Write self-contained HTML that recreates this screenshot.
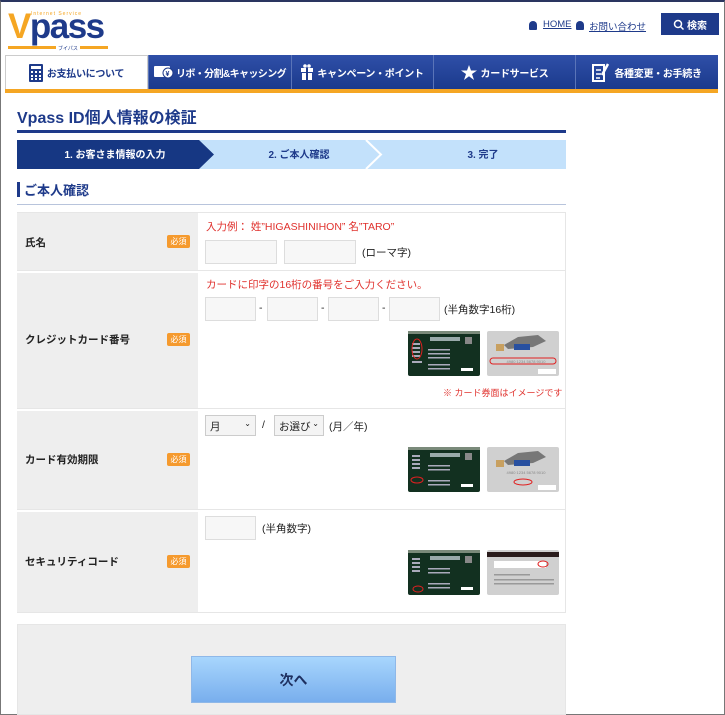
<!DOCTYPE html>
<html><head><meta charset="utf-8"><style>
*{box-sizing:border-box;margin:0;padding:0}
body{width:725px;height:715px;position:relative;overflow:hidden;background:#fff;font-family:"Liberation Sans","Noto Sans CJK JP",sans-serif;color:#222}
.a{position:absolute}
.frame{left:0;top:0;width:725px;height:715px;border:1px solid #777;border-top:2px solid #2a3560}
.tab{top:55px;height:34px;background:linear-gradient(#2f4fa8,#1b3a8c);color:#fff;font-size:10px;font-weight:bold;display:flex;align-items:center;justify-content:center;gap:4px;border-left:1px solid #5a74b8;white-space:nowrap;letter-spacing:-0.3px}
.ob{top:89px;height:4px;background:#f5a623}
.row{left:17px;width:549px;border:1px solid #e6e6e6;border-top:none}
.lab{left:17px;width:181px;background:#eee;font-size:11px;font-weight:bold}
.req{width:23px;height:13px;background:#f59a2e;color:#fff;font-size:8px;text-align:center;line-height:13px;border-radius:2px}
.inp{height:24px;border:1px solid #ddd;background:#f7f7f7}
.red{color:#e0322e;font-size:10.5px}
.t{font-size:10.5px}
.sel{height:21px;border:1px solid #ccc;background:#f4f4f4;font-size:10.5px;padding:3px 4px}
</style></head><body>
<div class="a frame"></div>
<!-- logo -->
<div class="a" style="left:8px;top:9px;font-size:35px;font-weight:bold;line-height:36px;letter-spacing:-1.5px"><span style="color:#f5a623">V</span><span style="color:#1e3a8a">pass</span></div>
<div class="a" style="left:31px;top:11px;font-size:5px;color:#f5a623;letter-spacing:1px">Internet Service</div>
<div class="a" style="left:8px;top:46px;width:100px;height:3px;background:#f5a623"></div>
<div class="a" style="left:56px;top:45px;font-size:5px;color:#1e3a8a;background:#fff;padding:0 2px">ブイパス</div>
<!-- header links -->
<div class="a" style="left:529px;top:21px;width:8px;height:9px;border-radius:4px 4px 1px 1px;background:#1e3a8a"></div>
<div class="a" style="left:543px;top:19px;font-size:9.5px;color:#1e3a8a;text-decoration:underline">HOME</div>
<div class="a" style="left:576px;top:21px;width:8px;height:9px;border-radius:4px 4px 1px 1px;background:#1e3a8a"></div>
<div class="a" style="left:589px;top:19px;font-size:9.5px;color:#1e3a8a;text-decoration:underline">お問い合わせ</div>
<div class="a" style="left:661px;top:13px;width:58px;height:22px;background:#1e3a8a;color:#fff;font-size:10px;font-weight:bold;display:flex;align-items:center;justify-content:center;gap:3px"><svg width="11" height="11"><circle cx="5" cy="5" r="3.5" stroke="#fff" stroke-width="1.5" fill="none"/><line x1="7.5" y1="7.5" x2="10.5" y2="10.5" stroke="#fff" stroke-width="1.5"/></svg>検索</div>
<!-- nav -->
<div class="a" style="left:5px;top:55px;width:713px;height:1px;background:#ccc"></div>
<div class="a tab" style="left:5px;width:143px;background:#fff;color:#1e3a8a;border:1px solid #ccc;border-bottom:none"><svg width="14" height="18"><rect x="0" y="0" width="14" height="18" rx="1" fill="#1e3a8a"/><rect x="2" y="2" width="10" height="3" fill="#fff"/><g fill="#fff"><rect x="2" y="7" width="2" height="2"/><rect x="6" y="7" width="2" height="2"/><rect x="10" y="7" width="2" height="2"/><rect x="2" y="11" width="2" height="2"/><rect x="6" y="11" width="2" height="2"/><rect x="10" y="11" width="2" height="2"/><rect x="2" y="14" width="2" height="2"/><rect x="6" y="14" width="2" height="2"/><rect x="10" y="14" width="2" height="2"/></g></svg>お支払いについて</div>
<div class="a tab" style="left:148px;width:143px;gap:2px;letter-spacing:-0.6px"><svg width="20" height="14"><rect x="0" y="1" width="16" height="11" rx="1" fill="#fff"/><circle cx="14" cy="8" r="5" fill="#fff" stroke="#1e3a8a"/><text x="11.5" y="11" font-size="7" fill="#1e3a8a" font-weight="bold">¥</text></svg>リボ・分割&amp;キャッシング</div>
<div class="a tab" style="left:291px;width:142px"><svg width="12" height="16"><rect x="0" y="4" width="12" height="4" fill="#fff"/><rect x="1" y="9" width="10" height="7" fill="#fff"/><rect x="5" y="4" width="2" height="12" fill="#1e3a8a"/><circle cx="4" cy="2" r="1.8" fill="#fff"/><circle cx="8" cy="2" r="1.8" fill="#fff"/></svg>キャンペーン・ポイント</div>
<div class="a tab" style="left:433px;width:142px"><svg width="16" height="15"><polygon points="8,0 10,5.5 16,5.5 11,9 13,15 8,11.3 3,15 5,9 0,5.5 6,5.5" fill="#fff"/></svg>カードサービス</div>
<div class="a tab" style="left:575px;width:143px"><svg width="18" height="20"><path d="M1 3h11v16H1z" fill="none" stroke="#fff" stroke-width="2"/><path d="M4 8h5M4 12h5M4 16h4" stroke="#fff" stroke-width="1.5"/><path d="M10 13L16 2" stroke="#fff" stroke-width="2.5"/></svg>各種変更・お手続き</div>
<div class="a ob" style="left:5px;width:713px"></div>
<!-- title -->
<div class="a" style="left:17px;top:109px;font-size:16px;line-height:20px;font-weight:bold;color:#1e3a8a">Vpass ID個人情報の検証</div>
<div class="a" style="left:17px;top:130px;width:549px;height:3px;background:#1e3a8a"></div>
<!-- steps -->
<svg class="a" style="left:17px;top:140px" width="549" height="29">
<rect x="0" y="0" width="549" height="29" fill="#c3e1fb"/>
<polygon points="0,0 182,0 197,14.5 182,29 0,29" fill="#163783"/>
<polyline points="349,0 364,14.5 349,29" fill="none" stroke="#fff" stroke-width="2"/>
<text x="98" y="18" font-size="10" font-weight="bold" fill="#fff" text-anchor="middle" font-family="Liberation Sans,Noto Sans CJK JP,sans-serif">1. お客さま情報の入力</text>
<text x="282" y="18" font-size="10" font-weight="bold" fill="#1e3a8a" text-anchor="middle" font-family="Liberation Sans,Noto Sans CJK JP,sans-serif">2. ご本人確認</text>
<text x="466" y="18" font-size="10" font-weight="bold" fill="#1e3a8a" text-anchor="middle" font-family="Liberation Sans,Noto Sans CJK JP,sans-serif">3. 完了</text>
</svg>
<div class="a" style="left:17px;top:182px;width:3px;height:15px;background:#1e3a8a"></div>
<div class="a" style="left:24px;top:180px;font-size:13px;font-weight:bold;color:#1e3a8a">ご本人確認</div>
<div class="a" style="left:17px;top:204px;width:549px;height:1px;background:#b8c4dc"></div>
<!-- table -->
<div class="a row" style="top:212px;height:59px;border-top:1px solid #e6e6e6"></div>
<div class="a row" style="top:271px;height:138px"></div>
<div class="a row" style="top:409px;height:101px"></div>
<div class="a row" style="top:510px;height:103px"></div>
<div class="a lab" style="top:213px;height:57px"></div>
<div class="a lab" style="top:271px;height:137px;border-top:2px solid #fff"></div>
<div class="a lab" style="top:409px;height:100px;border-top:2px solid #fff"></div>
<div class="a lab" style="top:510px;height:102px;border-top:2px solid #fff"></div>
<div class="a" style="left:25px;top:235px;font-size:10.5px;font-weight:bold">氏名</div>
<div class="a" style="left:25px;top:332px;font-size:10.5px;font-weight:bold">クレジットカード番号</div>
<div class="a" style="left:25px;top:452px;font-size:10.5px;font-weight:bold">カード有効期限</div>
<div class="a" style="left:25px;top:554px;font-size:10.5px;font-weight:bold">セキュリティコード</div>
<div class="a req" style="left:167px;top:235px">必須</div>
<div class="a req" style="left:167px;top:333px">必須</div>
<div class="a req" style="left:167px;top:453px">必須</div>
<div class="a req" style="left:167px;top:555px">必須</div>
<!-- row1 -->
<div class="a red" style="left:206px;top:219px">入力例： 姓”HIGASHINIHON” 名”TARO”</div>
<div class="a inp" style="left:205px;top:240px;width:72px"></div>
<div class="a inp" style="left:284px;top:240px;width:72px"></div>
<div class="a t" style="left:362px;top:245px">(ローマ字)</div>
<!-- row2 -->
<div class="a red" style="left:206px;top:277px">カードに印字の16桁の番号をご入力ください。</div>
<div class="a inp" style="left:205px;top:297px;width:51px"></div>
<div class="a t" style="left:259px;top:302px">-</div>
<div class="a inp" style="left:267px;top:297px;width:51px"></div>
<div class="a t" style="left:321px;top:302px">-</div>
<div class="a inp" style="left:328px;top:297px;width:51px"></div>
<div class="a t" style="left:382px;top:302px">-</div>
<div class="a inp" style="left:389px;top:297px;width:51px"></div>
<div class="a t" style="left:444px;top:302px">(半角数字16桁)</div>
<div class="a red" style="left:443px;top:386px;font-size:9px">※ カード券面はイメージです</div>
<!-- row3 -->
<div class="a sel" style="left:205px;top:415px;width:51px">月<span style="float:right;font-size:8px">⌄</span></div>
<div class="a t" style="left:262px;top:419px">/</div>
<div class="a sel" style="left:274px;top:415px;width:50px">お選び<span style="float:right;font-size:8px">⌄</span></div>
<div class="a t" style="left:329px;top:419px">(月／年)</div>
<!-- row4 -->
<div class="a inp" style="left:205px;top:516px;width:51px"></div>
<div class="a t" style="left:262px;top:521px">(半角数字)</div>
<!-- cards -->
<svg class="a" style="left:408px;top:331px" width="151" height="46">
<rect x="0" y="0" width="72" height="45" rx="2" fill="#123020"/><rect x="0" y="0" width="72" height="3" fill="#7a8a7a"/><rect x="22" y="6" width="30" height="4" fill="#9aa"/><rect x="57" y="6" width="7" height="7" fill="#888"/>
<g fill="#aab"><rect x="4" y="12" width="8" height="2"/><rect x="4" y="16" width="8" height="2"/><rect x="4" y="20" width="8" height="2"/><rect x="4" y="24" width="8" height="2"/><rect x="4" y="30" width="10" height="2"/><rect x="20" y="18" width="22" height="1.5"/><rect x="20" y="22" width="22" height="1.5"/><rect x="20" y="26" width="22" height="1.5"/><rect x="20" y="33" width="22" height="1.5"/><rect x="20" y="37" width="22" height="1.5"/></g><rect x="53" y="37" width="12" height="3" fill="#fff"/>
<ellipse cx="9" cy="18" rx="5" ry="10" fill="none" stroke="#e02020" stroke-width="1"/>
<rect x="79" y="0" width="72" height="45" rx="2" fill="#d0d0d0"/><path d="M96 14 L110 6 L130 4 L138 10 L125 16 L100 18z" fill="#777"/><rect x="88" y="13" width="8" height="7" fill="#c8a060"/><rect x="106" y="13" width="16" height="6" fill="#2850a0"/><rect x="130" y="38" width="18" height="5" fill="#fff"/><text x="118" y="32" font-size="4" fill="#888" text-anchor="middle">4980 1234 5678 9010</text>
<rect x="82" y="27" width="66" height="6" rx="3" fill="none" stroke="#e02020"/>
</svg>
<svg class="a" style="left:408px;top:447px" width="151" height="46">
<rect x="0" y="0" width="72" height="45" rx="2" fill="#123020"/><rect x="0" y="0" width="72" height="3" fill="#7a8a7a"/><rect x="22" y="6" width="30" height="4" fill="#9aa"/><rect x="57" y="6" width="7" height="7" fill="#888"/>
<g fill="#aab"><rect x="4" y="8" width="8" height="2"/><rect x="4" y="12" width="8" height="2"/><rect x="4" y="16" width="8" height="2"/><rect x="4" y="20" width="8" height="2"/><rect x="20" y="18" width="22" height="1.5"/><rect x="20" y="22" width="22" height="1.5"/><rect x="20" y="33" width="22" height="1.5"/><rect x="20" y="37" width="22" height="1.5"/></g><rect x="53" y="37" width="12" height="3" fill="#fff"/>
<ellipse cx="9" cy="33" rx="6" ry="3" fill="none" stroke="#e02020"/>
<rect x="79" y="0" width="72" height="45" rx="2" fill="#d0d0d0"/><path d="M96 14 L110 6 L130 4 L138 10 L125 16 L100 18z" fill="#777"/><rect x="88" y="13" width="8" height="7" fill="#c8a060"/><rect x="106" y="13" width="16" height="6" fill="#2850a0"/><rect x="130" y="38" width="18" height="5" fill="#fff"/><text x="118" y="27" font-size="4" fill="#888" text-anchor="middle">4980 1234 5678 9010</text>
<ellipse cx="115" cy="35" rx="9" ry="3" fill="none" stroke="#e02020"/>
</svg>
<svg class="a" style="left:408px;top:550px" width="151" height="46">
<rect x="0" y="0" width="72" height="45" rx="2" fill="#123020"/><rect x="0" y="0" width="72" height="3" fill="#7a8a7a"/><rect x="22" y="6" width="30" height="4" fill="#9aa"/><rect x="57" y="6" width="7" height="7" fill="#888"/>
<g fill="#aab"><rect x="4" y="8" width="8" height="2"/><rect x="4" y="12" width="8" height="2"/><rect x="4" y="16" width="8" height="2"/><rect x="4" y="20" width="8" height="2"/><rect x="20" y="18" width="22" height="1.5"/><rect x="20" y="22" width="22" height="1.5"/><rect x="20" y="33" width="22" height="1.5"/><rect x="20" y="37" width="22" height="1.5"/></g><rect x="53" y="37" width="12" height="3" fill="#fff"/>
<ellipse cx="10" cy="39" rx="5" ry="3" fill="none" stroke="#e02020"/>
<rect x="79" y="0" width="72" height="45" rx="2" fill="#d0d0d0"/><rect x="79" y="2" width="72" height="5" fill="#2a1c1c"/><rect x="86" y="11" width="52" height="7" fill="#fff"/>
<g fill="#999"><rect x="86" y="24" width="36" height="1.5"/><rect x="86" y="29" width="60" height="1.5"/><rect x="86" y="33" width="60" height="1.5"/></g>
<ellipse cx="135" cy="14" rx="5" ry="3" fill="none" stroke="#e02020"/>
</svg>
<!-- button area -->
<div class="a" style="left:17px;top:624px;width:549px;height:91px;background:#eee;border:1px solid #e6e6e6"></div>
<div class="a" style="left:191px;top:656px;width:205px;height:47px;background:linear-gradient(#a8d6fd,#78aeed);border:1px solid #8fb8e8;color:#1e3060;font-size:14px;font-weight:bold;display:flex;align-items:center;justify-content:center">次へ</div>
</body></html>
